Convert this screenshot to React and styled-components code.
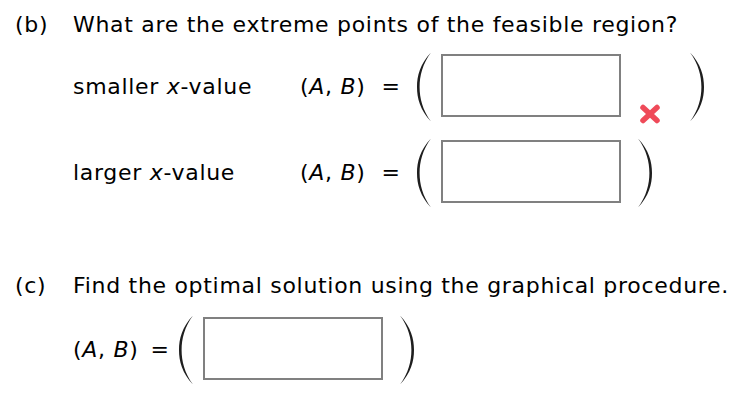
import React from 'react';
import styled, { createGlobalStyle } from 'styled-components';

const GlobalStyle = createGlobalStyle`
  html, body {
    margin: 0;
    padding: 0;
    background: #ffffff;
  }
  body {
    font-family: 'DejaVu Sans', Verdana, sans-serif;
    font-size: 22px;
    letter-spacing: 0.7px;
    color: #000000;
  }
`;

const Page = styled.div`
  width: 754px;
  height: 400px;
  padding-left: 15px;
  box-sizing: border-box;
  overflow: hidden;
`;

const Heading = styled.div`
  display: flex;
  line-height: 26px;
  white-space: nowrap;
  margin-top: ${({ top }) => top}px;
`;

const PartLabel = styled.span`
  width: 58px;
  flex-shrink: 0;
`;

const Row = styled.div`
  display: flex;
  align-items: center;
  height: 70px;
  padding-left: 58px;
  margin-top: ${({ top }) => top}px;
`;

const RowLabel = styled.span`
  width: 227px;
  flex-shrink: 0;
  padding-bottom: 2px;
  white-space: nowrap;
`;

const Expr = styled.span`
  padding-bottom: 2px;
  white-space: nowrap;
`;

const Eq = styled.span`
  margin: 0 ${({ right }) => right}px 0 ${({ left }) => left}px;
  padding-bottom: 2px;
`;

const AnswerBox = styled.div`
  width: 180px;
  height: 63px;
  border: 2px solid #808080;
  box-sizing: border-box;
  background: #ffffff;
  margin: 2px 16px 0 9px;
  align-self: flex-start;
`;

const ParenSvg = styled.svg`
  display: block;
  flex-shrink: 0;
  transform: ${({ flip }) => (flip ? 'scaleX(-1)' : 'none')};
`;

const WrongMark = styled.svg`
  display: block;
  flex-shrink: 0;
  align-self: flex-end;
  margin: 0 26px -4px 0;
`;

const Paren = ({ flip }) => (
  <ParenSvg flip={flip ? 1 : 0} width="16" height="70" viewBox="0 0 16 70">
    <path
      d="M15 0.5 C4 12 1 24 1 35 C1 46 4 58 15 69.5 C6.5 58 3.6 46 3.6 35 C3.6 24 6.5 12 15 0.5 Z"
      fill="#1e1e1e"
    />
  </ParenSvg>
);

const Cross = () => (
  <WrongMark width="26" height="24" viewBox="0 0 26 24">
    <g stroke="#ef4a59" strokeWidth="5.5" strokeLinecap="round">
      <line x1="6" y1="5.5" x2="20" y2="18.5" />
      <line x1="20" y1="5.5" x2="6" y2="18.5" />
    </g>
  </WrongMark>
);

const Point = () => (
  <>
    (<i>A</i>, <i>B</i>)
  </>
);

export default function App() {
  return (
    <Page>
      <GlobalStyle />
      <Heading top={12}>
        <PartLabel>(b)</PartLabel>
        <span>What are the extreme points of the feasible region?</span>
      </Heading>

      <Row top={14}>
        <RowLabel>
          smaller <i>x</i>-value
        </RowLabel>
        <Expr>
          <Point />
        </Expr>
        <Eq left={16} right={15}>=</Eq>
        <Paren />
        <AnswerBox />
        <Cross />
        <Paren flip />
      </Row>

      <Row top={16}>
        <RowLabel>
          larger <i>x</i>-value
        </RowLabel>
        <Expr>
          <Point />
        </Expr>
        <Eq left={16} right={15}>=</Eq>
        <Paren />
        <AnswerBox />
        <Paren flip />
      </Row>

      <Heading top={65}>
        <PartLabel>(c)</PartLabel>
        <span>Find the optimal solution using the graphical procedure.</span>
      </Heading>

      <Row top={16}>
        <Expr>
          <Point />
        </Expr>
        <Eq left={12} right={8}>=</Eq>
        <Paren />
        <AnswerBox />
        <Paren flip />
      </Row>
    </Page>
  );
}
